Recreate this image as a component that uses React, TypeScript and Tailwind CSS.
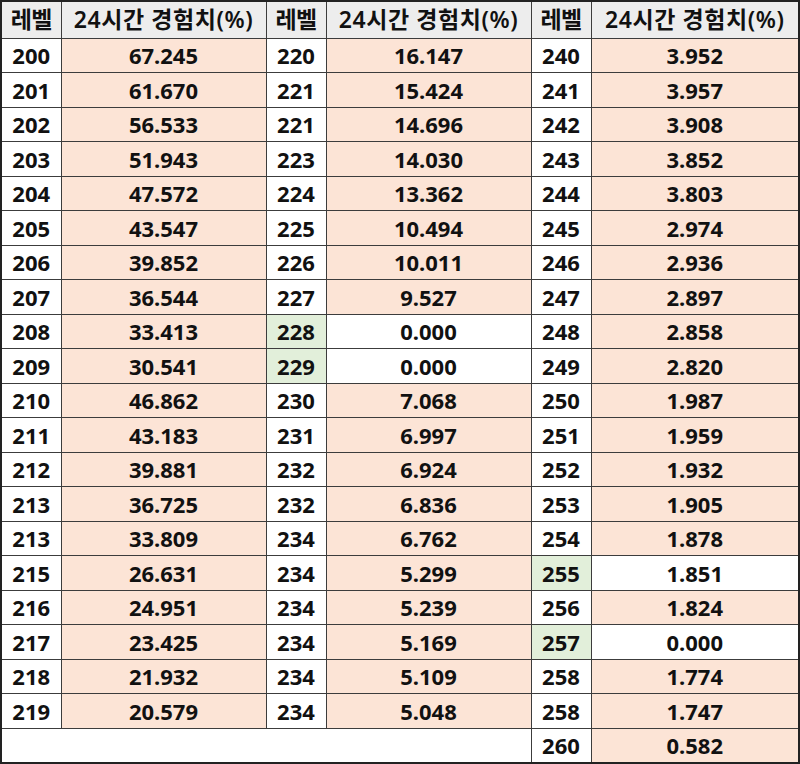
const COL1: [string, string][] = [
  ["200", "67.245"], ["201", "61.670"], ["202", "56.533"], ["203", "51.943"],
  ["204", "47.572"], ["205", "43.547"], ["206", "39.852"], ["207", "36.544"],
  ["208", "33.413"], ["209", "30.541"], ["210", "46.862"], ["211", "43.183"],
  ["212", "39.881"], ["213", "36.725"], ["213", "33.809"], ["215", "26.631"],
  ["216", "24.951"], ["217", "23.425"], ["218", "21.932"], ["219", "20.579"],
];

const COL2: [string, string][] = [
  ["220", "16.147"], ["221", "15.424"], ["221", "14.696"], ["223", "14.030"],
  ["224", "13.362"], ["225", "10.494"], ["226", "10.011"], ["227", "9.527"],
  ["228", "0.000"], ["229", "0.000"], ["230", "7.068"], ["231", "6.997"],
  ["232", "6.924"], ["232", "6.836"], ["234", "6.762"], ["234", "5.299"],
  ["234", "5.239"], ["234", "5.169"], ["234", "5.109"], ["234", "5.048"],
];

const COL3: [string, string][] = [
  ["240", "3.952"], ["241", "3.957"], ["242", "3.908"], ["243", "3.852"],
  ["244", "3.803"], ["245", "2.974"], ["246", "2.936"], ["247", "2.897"],
  ["248", "2.858"], ["249", "2.820"], ["250", "1.987"], ["251", "1.959"],
  ["252", "1.932"], ["253", "1.905"], ["254", "1.878"], ["255", "1.851"],
  ["256", "1.824"], ["257", "0.000"], ["258", "1.774"], ["258", "1.747"],
  ["260", "0.582"],
];

// levels highlighted green (value cell left white)
const MARKED = new Set(["228", "229", "255", "257"]);

const cell = "border border-[#3c3c3c] text-center";

function Pair({ level, value }: { level: string; value: string }) {
  const marked = MARKED.has(level);
  return (
    <>
      <td className={`${cell} ${marked ? "bg-[#e2efda]" : "bg-white"}`}>{level}</td>
      <td className={`${cell} ${marked ? "bg-white" : "bg-[#fce4d6]"}`}>{value}</td>
    </>
  );
}

export default function App() {
  return (
    <div className="w-[800px] h-[764px] bg-white">
      <table
        className="w-[800px] table-fixed border-collapse border-2 border-[#222] text-[22px] font-bold text-[#111]"
        style={{ fontFamily: '"Noto Sans", "Noto Sans CJK KR", sans-serif' }}
      >
        <colgroup>
          <col className="w-[60px]" />
          <col className="w-[205px]" />
          <col className="w-[60px]" />
          <col className="w-[205px]" />
          <col className="w-[60px]" />
          <col />
        </colgroup>
        <thead>
          <tr className="h-[37px] bg-[#ededed] text-[23px] leading-none">
            {[0, 1, 2].map((i) => (
              <>
                <th key={`l${i}`} className={`${cell} font-bold tracking-tight`}>레벨</th>
                <th key={`v${i}`} className={`${cell} font-semibold tracking-wide`}>24시간 경험치(%)</th>
              </>
            ))}
          </tr>
        </thead>
        <tbody>
          {COL3.map((c, i) => (
            <tr key={i} className="h-[34.5px] leading-none">
              {i < 20 ? (
                <>
                  <Pair level={COL1[i][0]} value={COL1[i][1]} />
                  <Pair level={COL2[i][0]} value={COL2[i][1]} />
                </>
              ) : (
                <td colSpan={4} className={`${cell} bg-white`} />
              )}
              <Pair level={c[0]} value={c[1]} />
            </tr>
          ))}
        </tbody>
      </table>
    </div>
  );
}
